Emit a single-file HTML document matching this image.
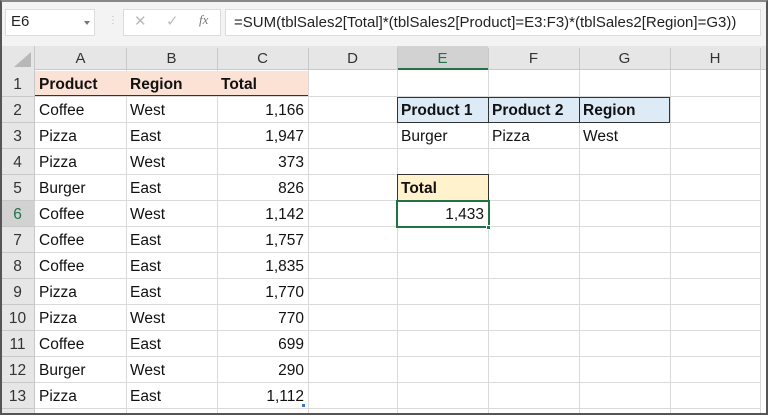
<!DOCTYPE html>
<html><head><style>
*{margin:0;padding:0;box-sizing:border-box}
body{width:768px;height:415px;overflow:hidden;background:#fff;font-family:"Liberation Sans",sans-serif;position:relative}
.a{position:absolute}
.c{position:absolute;font-size:15.5px;line-height:28px;height:26px;color:#111;padding:0 4px;white-space:nowrap}
.r{text-align:right}
.b{font-weight:bold}
.h{position:absolute;font-size:15px;color:#333;text-align:center;line-height:24px}
</style></head><body>
<div class="a" style="left:0;top:0;width:768px;height:46px;background:#f3f3f3"></div>
<div class="a" style="left:5px;top:9px;width:90px;height:27px;background:#fff;border:1px solid #dcdcdc"></div>
<div class="a" style="left:11px;top:13px;font-size:15px;color:#222">E6</div>
<div class="a" style="left:84px;top:21px;width:0;height:0;border-left:3px solid transparent;border-right:3px solid transparent;border-top:4px solid #777"></div>
<div class="a" style="left:108px;top:15px;color:#bbb;font-size:10px">⋮</div>
<div class="a" style="left:123px;top:9px;width:98px;height:27px;background:#fff;border:1px solid #dcdcdc"></div>
<div class="a" style="left:134px;top:12px;color:#bbb;font-size:15px">✕</div>
<div class="a" style="left:166px;top:12px;color:#bbb;font-size:15px">✓</div>
<div class="a" style="left:199px;top:12px;color:#777;font-size:13px;font-style:italic;font-family:'Liberation Serif',serif">fx</div>
<div class="a" style="left:225px;top:9px;width:536px;height:27px;background:#fff;border:1px solid #dcdcdc"></div>
<div class="a" style="left:234px;top:14px;font-size:15px;color:#222;white-space:nowrap">=SUM(tblSales2[Total]*(tblSales2[Product]=E3:F3)*(tblSales2[Region]=G3))</div>
<div class="a" style="left:0;top:46px;width:768px;height:24px;background:#e6e6e6;border-bottom:1px solid #c8c8c8"></div>
<div class="a" style="left:0;top:46px;width:35px;height:369px;background:#e6e6e6;border-right:1px solid #c8c8c8"></div>
<div class="a" style="left:14px;top:52px;width:0;height:0;border-left:17px solid transparent;border-bottom:15px solid #b8b8b8"></div>
<div class="a" style="left:397px;top:46px;width:91px;height:24px;background:#d2d2d2;border-bottom:2px solid #217346"></div>
<div class="a" style="left:0;top:200px;width:35px;height:26px;background:#d2d2d2"></div>
<div id="g"></div>
<div class="a" style="left:0;top:0;width:768px;height:415px;border:2px solid #555;border-top-color:#888"></div>
<script>
var cols=[35,126,217,308,397,488,579,670,760],L="ABCDEFGH",h="";
for(var i=0;i<8;i++){h+='<div class="h" style="left:'+cols[i]+'px;top:47px;width:'+(cols[i+1]-cols[i])+'px;'+(i==4?'color:#217346':'')+'">'+L[i]+'</div>';
h+='<div class="a" style="left:'+cols[i+1]+'px;top:48px;width:1px;height:22px;background:#c8c8c8"></div>';
h+='<div class="a" style="left:'+cols[i+1]+'px;top:70px;width:1px;height:345px;background:#dadada"></div>';}
for(var r=1;r<=13;r++){var t=70+26*(r-1);
h+='<div class="a" style="left:35px;top:'+(t+26)+'px;width:725px;height:1px;background:#dadada"></div>';
h+='<div class="a" style="left:0;top:'+(t+26)+'px;width:35px;height:1px;background:#c8c8c8"></div>';
h+='<div class="h" style="left:0;top:'+(t+2)+'px;width:35px;font-size:15.5px;line-height:26px;'+(r==6?'color:#217346':'')+'">'+r+'</div>';}
h+='<div class="a" style="left:35px;top:71px;width:273px;height:25px;background:#fbe2d5;border-bottom:1px solid #333"></div>';
h+='<div class="a" style="left:397px;top:97px;width:273px;height:26px;background:#ddebf7;border:1px solid #333"></div>';
h+='<div class="a" style="left:488px;top:97px;width:1px;height:26px;background:#333"></div><div class="a" style="left:579px;top:97px;width:1px;height:26px;background:#333"></div>';
h+='<div class="a" style="left:397px;top:174px;width:92px;height:27px;background:#fff2cc;border:1px solid #333"></div>';
var d=[["Coffee","West","1,166"],["Pizza","East","1,947"],["Pizza","West","373"],["Burger","East","826"],["Coffee","West","1,142"],["Coffee","East","1,757"],["Coffee","East","1,835"],["Pizza","East","1,770"],["Pizza","West","770"],["Coffee","East","699"],["Burger","West","290"],["Pizza","East","1,112"]];
function c(x,w,y,t,cl){h+='<div class="c '+(cl||'')+'" style="left:'+x+'px;top:'+y+'px;width:'+w+'px">'+t+'</div>';}
c(35,91,71,"Product","b");c(126,91,71,"Region","b");c(217,91,71,"Total","b");
for(var k=0;k<12;k++){var y=97+26*k;c(35,91,y,d[k][0]);c(126,91,y,d[k][1]);c(217,91,y,d[k][2],"r");}
c(397,91,97,"Product 1","b");c(488,91,97,"Product 2","b");c(579,91,97,"Region","b");
c(397,91,123,"Burger");c(488,91,123,"Pizza");c(579,91,123,"West");
c(397,91,175,"Total","b");
h+='<div class="a" style="left:396px;top:200px;width:94px;height:28px;border:2px solid #217346"></div>';
h+='<div class="a" style="left:486px;top:225px;width:5px;height:5px;background:#217346;border:1px solid #fff"></div>';
c(397,91,201,"1,433","r");
h+='<div class="a" style="left:302px;top:404px;width:3px;height:3px;background:#4472c4"></div>';
document.getElementById("g").innerHTML=h;
</script>
</body></html>
